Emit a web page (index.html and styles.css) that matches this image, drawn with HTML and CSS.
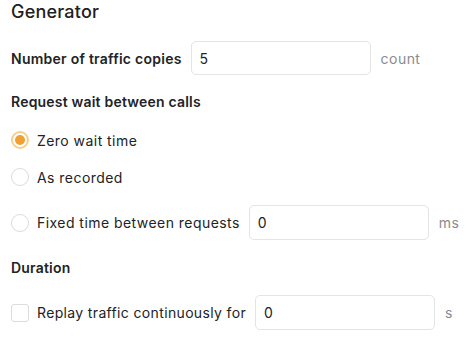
FILE: index.html
```html
<!DOCTYPE html>
<html>
<head>
<meta charset="utf-8">
<link rel="stylesheet" href="styles.css">
</head>
<body>
<div class="panel">
  <div class="title">Generator</div>

  <div class="row row-copies">
    <span class="label">Number of traffic copies</span>
    <div class="input">5</div>
    <span class="unit">count</span>
  </div>

  <div class="section section-wait">Request wait between calls</div>

  <div class="row radio-row r1">
    <span class="radio checked"><span class="dot"></span></span>
    <span class="text">Zero wait time</span>
  </div>
  <div class="row radio-row r2">
    <span class="radio"></span>
    <span class="text">As recorded</span>
  </div>
  <div class="row radio-row r3">
    <span class="radio"></span>
    <span class="text">Fixed time between requests</span>
    <div class="input">0</div>
    <span class="unit">ms</span>
  </div>

  <div class="section section-duration">Duration</div>

  <div class="row check-row">
    <span class="check"></span>
    <span class="text">Replay traffic continuously for</span>
    <div class="input">0</div>
    <span class="unit">s</span>
  </div>
</div>
</body>
</html>
```

FILE: styles.css
```css
html, body {
  margin: 0;
  padding: 0;
  background: #ffffff;
}
body {
  font-family: Inter, "Noto Sans", sans-serif;
  color: #222326;
  font-size: 14px;
  letter-spacing: 0.45px;
}
.panel {
  display: flex;
  flex-direction: column;
  padding: 0 11px;
}
.title {
  font-size: 18px;
  font-weight: 500;
  line-height: 24px;
  height: 24px;
  color: #1f2024;
  letter-spacing: 0.2px;
}
.row {
  display: flex;
  align-items: center;
}
.row-copies {
  margin-top: 17px;
  height: 34px;
}
.row-copies .input {
  height: 34px;
}
.label {
  font-weight: 600;
  margin-right: 9px;
  letter-spacing: 0.25px;
}
.input {
  box-sizing: border-box;
  width: 180px;
  height: 35px;
  border: 1px solid #e4e4e6;
  border-radius: 5px;
  padding-left: 8px;
  display: flex;
  align-items: center;
  color: #222326;
}
.unit {
  margin-left: 10px;
  color: #8a8b90;
}
.section {
  font-weight: 600;
  line-height: 20px;
  height: 20px;
  letter-spacing: 0.2px;
}
.section-wait {
  margin-top: 17px;
}
.section-duration {
  margin-top: 18px;
}
.radio-row {
  height: 24px;
}
.r1 { margin-top: 16px; }
.r2 { margin-top: 13px; }
.r3 { margin-top: 16px; height: 35px; }
.radio {
  box-sizing: border-box;
  width: 18px;
  height: 18px;
  border-radius: 50%;
  border: 1px solid #dcdcde;
  display: flex;
  align-items: center;
  justify-content: center;
  margin-right: 8px;
  flex: none;
}
.radio.checked {
  border: 2px solid #f6cf8f;
}
.radio .dot {
  width: 10px;
  height: 10px;
  border-radius: 50%;
  background: #f0a131;
}
.r3 .text {
  margin-right: 9px;
}
.check-row {
  margin-top: 17px;
  height: 35px;
}
.check {
  box-sizing: border-box;
  width: 18px;
  height: 18px;
  border: 1px solid #dcdcde;
  border-radius: 3px;
  margin-right: 8px;
  flex: none;
}
.check-row .text {
  margin-right: 9px;
  letter-spacing: 0.35px;
}
```
